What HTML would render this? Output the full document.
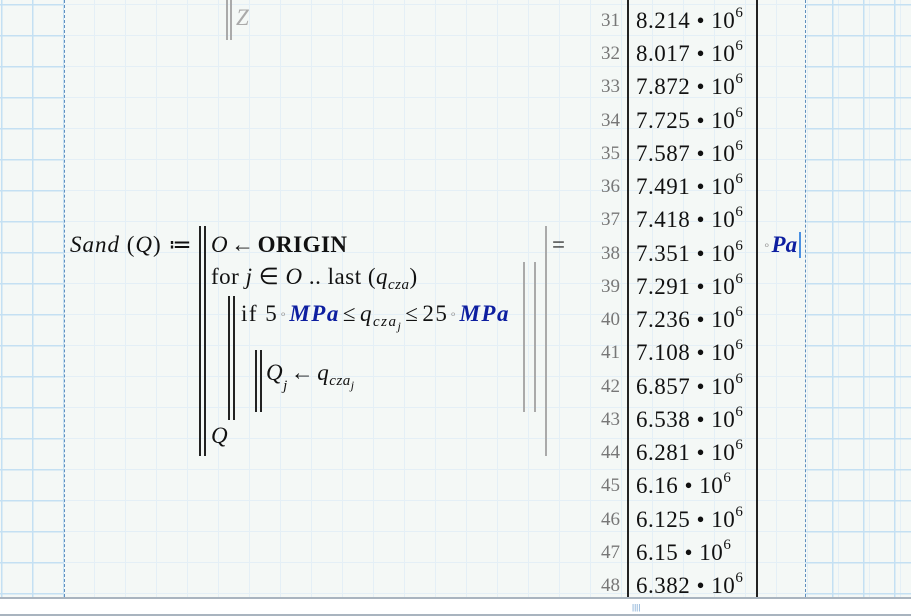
<!DOCTYPE html>
<html><head><meta charset="utf-8"><style>
body{margin:0;width:911px;height:616px;overflow:hidden;background:#f4f8f6;position:relative;font-family:"Liberation Serif",serif;}
.g{position:absolute;left:0;top:0;width:911px;height:597px;
background-image:linear-gradient(to right,#e4eff6 1px,transparent 1px),linear-gradient(to bottom,#e4eff6 1px,transparent 1px);
background-size:31px 31px;background-position:1px 4px;}
.gs{position:absolute;top:0;height:597px;
background-image:linear-gradient(to right,#c4e0f3 1.5px,transparent 1.5px),linear-gradient(to bottom,#c4e0f3 1.5px,transparent 1.5px);
background-size:31px 31px;background-position:1px 4px;}
.dash{position:absolute;top:0;height:597px;width:0;border-left:1px dashed #5f8fbf;}
.a{position:absolute;white-space:nowrap;color:#111;font-size:23px;line-height:1;}
i{font-style:italic}
.b{color:#0d1ea0;font-weight:bold;font-style:italic}
.sub{font-size:15px;font-style:italic;position:relative;top:5px}
.dot{color:#999;font-size:12px;vertical-align:3px;margin:0 1px}
.op{margin:0 3px}
.vl{position:absolute;width:1.5px;background:#222;}
.vg{position:absolute;width:1.5px;background:#aaa;}
.rn{position:absolute;left:580px;width:40px;text-align:right;color:#777;font-size:19px}
.val{position:absolute;left:636px;font-size:23px;color:#111;letter-spacing:0.5px}
.val sup{font-size:15px;position:relative;top:-3px;vertical-align:top}
</style></head><body>
<div class="g"></div>
<div class="gs" style="left:0;width:64px"></div>
<div class="gs" style="left:805px;width:106px;background-position:-4px 4px"></div>
<div class="dash" style="left:64px"></div>
<div class="dash" style="left:805px"></div>

<div class="vg" style="left:226px;top:0;height:40px"></div>
<div class="vg" style="left:230px;top:0;height:40px"></div>
<div class="a" style="left:236px;top:6px;color:#aaa;font-style:italic">Z</div>

<div class="a" style="left:70px;top:233px;letter-spacing:1px"><i>Sand</i> (<i>Q</i>) ≔</div>
<div class="vl" style="left:199px;top:226px;height:230px"></div>
<div class="vl" style="left:204px;top:226px;height:230px"></div>
<div class="a" style="left:211px;top:233px;letter-spacing:0.5px"><i>O</i><span class="op">←</span><b>ORIGIN</b></div>
<div class="a" style="left:211px;top:265px;letter-spacing:0.5px">for <i>j</i> ∈ <i>O</i> .. last (<i>q</i><span class="sub">cza</span>)</div>
<div class="vl" style="left:228px;top:296px;height:124px"></div>
<div class="vl" style="left:233px;top:296px;height:124px"></div>
<div class="a" style="left:241px;top:302px;letter-spacing:1.5px">if 5<span class="dot">∘</span><span class="b">MPa</span><span class="op">≤</span><i>q</i><span class="sub">cza<sub style="font-size:12px">j</sub></span><span class="op">≤</span>25<span class="dot">∘</span><span class="b">MPa</span></div>
<div class="vl" style="left:255px;top:350px;height:62px"></div>
<div class="vl" style="left:260px;top:350px;height:62px"></div>
<div class="a" style="left:266px;top:361px;letter-spacing:0.5px"><i>Q</i><span class="sub" style="top:10px">j</span><span class="op">←</span><i>q</i><span class="sub">cza<sub style="font-size:12px">j</sub></span></div>
<div class="a" style="left:211px;top:424px"><i>Q</i></div>
<div class="vg" style="left:523px;top:262px;height:150px"></div>
<div class="vg" style="left:534px;top:262px;height:150px"></div>
<div class="vg" style="left:545px;top:226px;height:230px"></div>
<div class="a" style="left:552px;top:233px">=</div>

<div class="vl" style="left:627px;top:0;height:597px;width:2px"></div>
<div class="vl" style="left:756px;top:0;height:597px;width:2px"></div>
<div class="a" style="left:762px;top:233px"><span class="dot">∘</span><span class="b">Pa</span></div>
<div style="position:absolute;left:799px;top:232px;width:2px;height:26px;background:#4a90e2"></div>

<div class="rn" style="top:10px">31</div><div class="val" style="top:8px">8.214 • 10<sup>6</sup></div>
<div class="rn" style="top:43px">32</div><div class="val" style="top:41px">8.017 • 10<sup>6</sup></div>
<div class="rn" style="top:76px">33</div><div class="val" style="top:74px">7.872 • 10<sup>6</sup></div>
<div class="rn" style="top:110px">34</div><div class="val" style="top:108px">7.725 • 10<sup>6</sup></div>
<div class="rn" style="top:143px">35</div><div class="val" style="top:141px">7.587 • 10<sup>6</sup></div>
<div class="rn" style="top:176px">36</div><div class="val" style="top:174px">7.491 • 10<sup>6</sup></div>
<div class="rn" style="top:209px">37</div><div class="val" style="top:207px">7.418 • 10<sup>6</sup></div>
<div class="rn" style="top:243px">38</div><div class="val" style="top:241px">7.351 • 10<sup>6</sup></div>
<div class="rn" style="top:276px">39</div><div class="val" style="top:274px">7.291 • 10<sup>6</sup></div>
<div class="rn" style="top:309px">40</div><div class="val" style="top:307px">7.236 • 10<sup>6</sup></div>
<div class="rn" style="top:342px">41</div><div class="val" style="top:340px">7.108 • 10<sup>6</sup></div>
<div class="rn" style="top:376px">42</div><div class="val" style="top:374px">6.857 • 10<sup>6</sup></div>
<div class="rn" style="top:409px">43</div><div class="val" style="top:407px">6.538 • 10<sup>6</sup></div>
<div class="rn" style="top:442px">44</div><div class="val" style="top:440px">6.281 • 10<sup>6</sup></div>
<div class="rn" style="top:475px">45</div><div class="val" style="top:473px">6.16 • 10<sup>6</sup></div>
<div class="rn" style="top:509px">46</div><div class="val" style="top:507px">6.125 • 10<sup>6</sup></div>
<div class="rn" style="top:542px">47</div><div class="val" style="top:540px">6.15 • 10<sup>6</sup></div>
<div class="rn" style="top:575px">48</div><div class="val" style="top:573px">6.382 • 10<sup>6</sup></div>

<div style="position:absolute;left:0;top:597px;width:911px;height:2px;background:#a9b4bf"></div>
<div style="position:absolute;left:0;top:599px;width:911px;height:15px;background:#fff"></div>
<div style="position:absolute;left:632px;top:603px;font-size:8px;color:#6a9ccc;font-family:'Liberation Sans',sans-serif">||||</div>
<div style="position:absolute;left:0;top:614px;width:911px;height:2px;background:#a9b4bf"></div>
</body></html>
